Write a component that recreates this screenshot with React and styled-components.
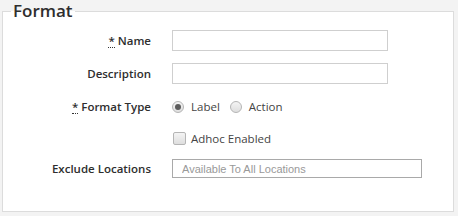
import React from 'react';
import styled, { createGlobalStyle } from 'styled-components';

const GlobalStyle = createGlobalStyle`
html, body {
    margin: 0;
    padding: 0;
    background: #f3f3f3;
}
body {
    font-family: "Open Sans", "Liberation Sans", sans-serif;
    color: #333;
}
`;

const Fieldset = styled.fieldset`
box-sizing: border-box;
margin: 0 4px 0 2px;
height: 212px;
padding: 8px 0 0 0;
border: 1px solid #dcdcdc;
background: #fff;
`;

const Legend = styled.legend`
margin-left: 8px;
padding: 0 2px;
font-size: 17px;
line-height: 22px;
font-weight: 600;
color: #2e2e2e;
background: linear-gradient(to bottom, #f3f3f3 50%, #fff 50%);
`;

const Form = styled.div`
display: grid;
grid-template-columns: 148px 1fr;
column-gap: 21px;
align-items: center;
`;

const Label = styled.div`
grid-column: 1;
text-align: right;
font-size: 11.5px;
font-weight: 600;
color: #2e2e2e;
height: ${p => p.$h || 21}px;
line-height: ${p => p.$h || 21}px;
margin-bottom: ${p => p.$gap ?? 12}px;
`;

const Req = styled.abbr`
text-decoration: none;
border-bottom: 1px dotted #333;
margin-right: 3px;
line-height: 12px;
display: inline-block;
`;

const Control = styled.div`
grid-column: 2;
display: flex;
align-items: center;
height: ${p => p.$h || 21}px;
margin-bottom: ${p => p.$gap ?? 12}px;
`;

const TextInput = styled.input`
box-sizing: border-box;
width: ${p => p.$w}px;
height: ${p => p.$h || 21}px;
border: 1px solid ${p => p.$dark ? '#a9a9a9' : '#cfcfcf'};
padding: 0 9px;
margin: 0;
font-family: "Liberation Sans", Arial, sans-serif;
font-size: 11px;
color: #333;
background: #fff;
outline: none;
&::placeholder {
    color: #999;
}
`;

const Radio = styled.span`
box-sizing: border-box;
display: inline-block;
width: 12px;
height: 12px;
border-radius: 50%;
border: 1px solid #b5b5b5;
background: linear-gradient(to bottom, #f4f4f4, #dedede);
position: relative;
margin-right: 7px;
&::after {
    content: '';
    display: ${p => p.$checked ? 'block' : 'none'};
    position: absolute;
    left: 2px;
    top: 2px;
    width: 6px;
    height: 6px;
    border-radius: 50%;
    background: #5c5c5c;
}
`;

const Checkbox = styled.span`
box-sizing: border-box;
display: inline-block;
width: 13px;
height: 13px;
border-radius: 2px;
border: 1px solid #b5b5b5;
background: linear-gradient(to bottom, #f4f4f4, #dedede);
margin-left: 1px;
margin-right: 5px;
`;

const OptionText = styled.span`
font-size: 11.5px;
color: #444;
margin-right: ${p => p.$mr || 0}px;
`;

export default function App() {
    return (
        <>
            <GlobalStyle />
            <Fieldset>
                <Legend>Format</Legend>
                <Form>
                    <Label><Req title="required">*</Req>Name</Label>
                    <Control><TextInput $w={216} /></Control>

                    <Label>Description</Label>
                    <Control><TextInput $w={216} /></Control>

                    <Label $gap={11}><Req title="required">*</Req>Format Type</Label>
                    <Control $gap={11}>
                        <Radio $checked />
                        <OptionText $mr={10}>Label</OptionText>
                        <Radio />
                        <OptionText>Action</OptionText>
                    </Control>

                    <Label $gap={10}></Label>
                    <Control $gap={10}>
                        <Checkbox />
                        <OptionText>Adhoc Enabled</OptionText>
                    </Control>

                    <Label $h={19} $gap={0}>Exclude Locations</Label>
                    <Control $h={19} $gap={0}>
                        <TextInput $w={250} $h={19} $dark placeholder="Available To All Locations" />
                    </Control>
                </Form>
            </Fieldset>
        </>
    );
}
